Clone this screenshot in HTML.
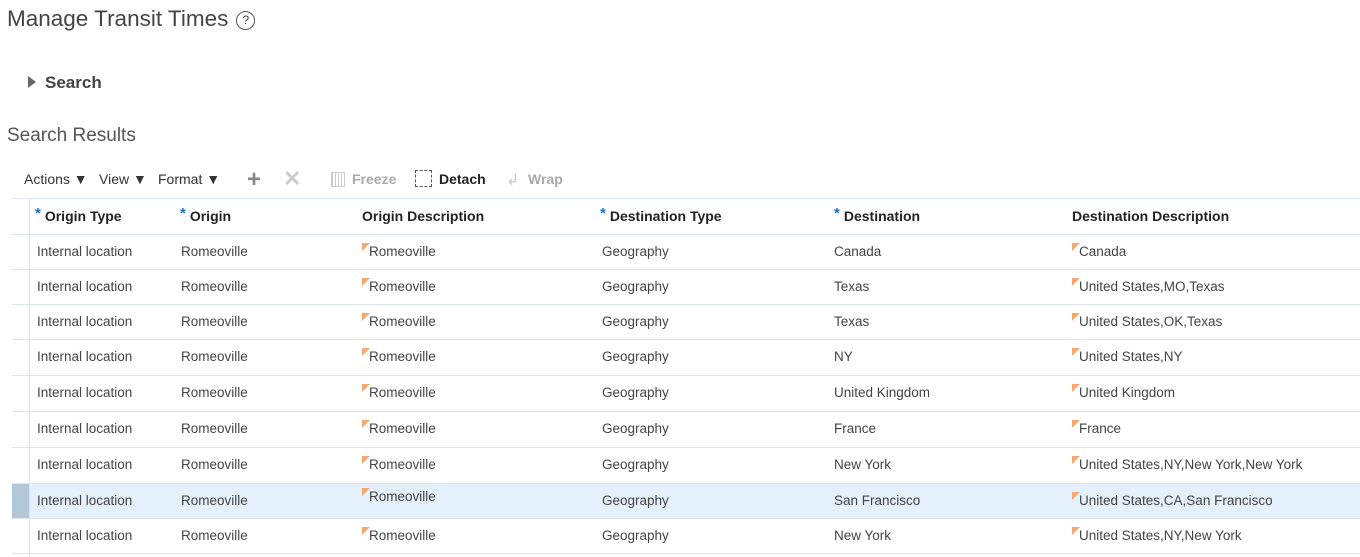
<!DOCTYPE html>
<html><head><style>
body{margin:0;width:1360px;height:557px;overflow:hidden;background:#fff;font-family:"Liberation Sans",Arial,sans-serif;position:relative;color:#333}
.a{position:absolute;white-space:nowrap}
h1{position:absolute;left:7px;top:6px;margin:0;font-weight:normal;font-size:22.5px;color:#444}
.help{display:inline-block;width:17px;height:17px;border:1.3px solid #555;border-radius:50%;font-size:12px;text-align:center;line-height:17px;vertical-align:2px;margin-left:8px}
.tb{font-size:14px;color:#333;top:171px}
.dis{color:#aaa;font-weight:bold}
.hd{font-size:14px;font-weight:bold;color:#222;top:208px}
.st{color:#1f6fc1;font-weight:bold;font-size:15px;position:relative;top:-3px;margin-right:4px;line-height:0}
.c{font-size:13.5px;color:#444}
.tri{position:absolute;width:0;height:0;border-top:8px solid #f3a872;border-right:8px solid transparent}
.hl{position:absolute;left:12px;right:0;height:1px;background:#dde3ea}
</style></head><body>
<h1>Manage Transit Times<span class="help">?</span></h1>
<div class="a" style="left:28px;top:76px;width:0;height:0;border-left:8px solid #666;border-top:6px solid transparent;border-bottom:6px solid transparent"></div>
<div class="a" style="left:45px;top:73px;font-size:17px;font-weight:bold;color:#444">Search</div>
<div class="a" style="left:7px;top:125px;font-size:19px;color:#555">Search Results</div>
<div class="a tb" style="left:24px">Actions ▼</div>
<div class="a tb" style="left:99px">View ▼</div>
<div class="a tb" style="left:158px">Format ▼</div>
<div class="a" style="left:247px;top:166px;font-size:24px;font-weight:bold;color:#888">+</div>
<div class="a" style="left:283px;top:166px;font-size:22px;font-weight:bold;color:#ccc">✕</div>
<div class="a" style="left:331px;top:172px;width:12px;height:13px;border:1px solid #ccc;background:repeating-linear-gradient(90deg,#ccc 0 1px,transparent 1px 3px)"></div>
<div class="a tb dis" style="left:352px">Freeze</div>
<div class="a" style="left:415px;top:170px;width:15px;height:15px;border:1px dashed #555"></div>
<div class="a tb" style="left:439px;font-weight:bold;color:#222">Detach</div>
<div class="a" style="left:506px;top:170px;font-size:16px;color:#ccc">↲</div>
<div class="a tb dis" style="left:528px">Wrap</div>
<div class="hl" style="top:198px"></div>
<div class="a" style="left:29px;top:199px;width:1px;height:358px;background:#dde3ea"></div>
<div class="a" style="left:12px;top:483px;width:17px;height:35px;background:#b4c7d7"></div>
<div class="a" style="left:30px;top:483px;right:0;height:35px;background:#e4f0fc"></div>
<div class="a hd" style="left:35px"><span class="st">*</span>Origin Type</div>
<div class="a hd" style="left:180px"><span class="st">*</span>Origin</div>
<div class="a hd" style="left:362px">Origin Description</div>
<div class="a hd" style="left:600px"><span class="st">*</span>Destination Type</div>
<div class="a hd" style="left:834px"><span class="st">*</span>Destination</div>
<div class="a hd" style="left:1072px">Destination Description</div>
<div id="rows"></div>
<script>
var d=[["Canada","Canada"],["Texas","United States,MO,Texas"],["Texas","United States,OK,Texas"],["NY","United States,NY"],["United Kingdom","United Kingdom"],["France","France"],["New York","United States,NY,New York,New York"],["San Francisco","United States,CA,San Francisco"],["New York","United States,NY,New York"]];
var tops=[234,269,304,339,375,411,447,483,518,553],h="";
for(var i=0;i<9;i++){var t=tops[i],y=t+10,dy=(i==7)?y-4:y;
h+='<div class="hl" style="top:'+t+'px"></div>';
h+='<div class="a c" style="left:37px;top:'+y+'px">Internal location</div>';
h+='<div class="a c" style="left:181px;top:'+y+'px">Romeoville</div>';
h+='<div class="tri" style="left:362px;top:'+(dy-1)+'px"></div><div class="a c" style="left:369px;top:'+dy+'px">Romeoville</div>';
h+='<div class="a c" style="left:602px;top:'+y+'px">Geography</div>';
h+='<div class="a c" style="left:834px;top:'+y+'px">'+d[i][0]+'</div>';
h+='<div class="tri" style="left:1072px;top:'+(y-1)+'px"></div><div class="a c" style="left:1079px;top:'+y+'px">'+d[i][1]+'</div>';}
h+='<div class="hl" style="top:553px"></div>';
document.getElementById("rows").innerHTML=h;
</script>
</body></html>
